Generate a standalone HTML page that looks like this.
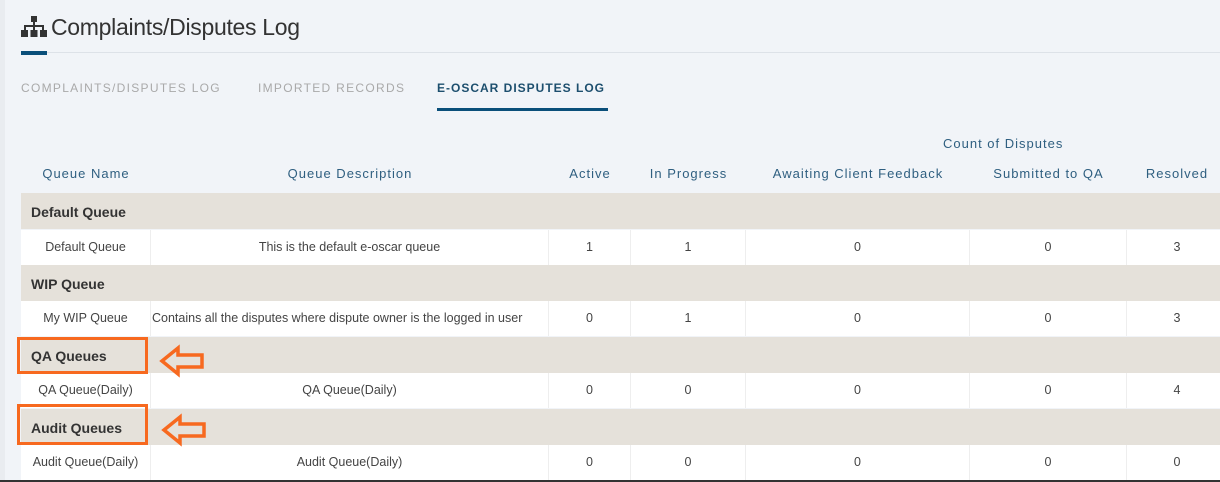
<!DOCTYPE html>
<html><head><meta charset="utf-8"><style>
*{margin:0;padding:0;box-sizing:border-box}
body{width:1220px;height:482px;overflow:hidden;background:#f1f4f8;font-family:"Liberation Sans",sans-serif;position:relative}
.abs{position:absolute}
.title{left:51px;top:14px;font-size:23px;color:#333;letter-spacing:-0.3px}
.tab{top:81px;font-size:12px;letter-spacing:1.3px;color:#a9a9a9}
.hd{top:166px;font-size:13px;color:#2f5f80;letter-spacing:1px;text-align:center;white-space:nowrap}
.row{position:absolute;left:21px;width:1199px}
.grp{background:#e5e1da;height:36px;font-weight:bold;font-size:14px;color:#333;padding:11px 0 0 10px}
.dat{background:#fff;height:35px;font-size:12.5px;color:#444}
.dat div{position:absolute;top:0;height:35px;line-height:35px;text-align:center;border-right:1px solid #eee}
</style></head><body>
<div class="abs" style="left:0;top:0;width:5px;height:482px;background:#e9ecf0"></div>
<svg class="abs" style="left:21px;top:16px" width="26" height="22" viewBox="0 0 26 22"><rect x="10" y="0" width="6" height="6" fill="#333"/><rect x="12" y="6" width="2" height="4" fill="#333"/><rect x="3" y="9" width="20" height="2" fill="#333"/><rect x="3" y="9" width="2" height="5" fill="#333"/><rect x="21" y="9" width="2" height="5" fill="#333"/><rect x="12" y="9" width="2" height="5" fill="#333"/><rect x="0" y="14" width="7" height="7" fill="#333"/><rect x="9.5" y="14" width="7" height="7" fill="#333"/><rect x="19" y="14" width="7" height="7" fill="#333"/></svg>
<div class="abs title">Complaints/Disputes Log</div>
<div class="abs" style="left:21px;top:52px;width:1199px;height:1px;background:#dde2e8"></div>
<div class="abs" style="left:21px;top:51px;width:26px;height:4px;background:#0a4f7a"></div>
<div class="abs tab" style="left:21px">COMPLAINTS/DISPUTES LOG</div>
<div class="abs tab" style="left:258px">IMPORTED RECORDS</div>
<div class="abs tab" style="left:437px;color:#1d4f6e;font-weight:bold;letter-spacing:1px">E-OSCAR DISPUTES LOG</div>
<div class="abs" style="left:437px;top:108px;width:171px;height:3px;background:#0a4f7a"></div>
<div class="abs hd" style="left:943px;top:136px">Count of Disputes</div>
<div class="abs hd" style="left:21px;width:130px">Queue Name</div>
<div class="abs hd" style="left:151px;width:398px">Queue Description</div>
<div class="abs hd" style="left:549px;width:82px">Active</div>
<div class="abs hd" style="left:631px;width:115px">In Progress</div>
<div class="abs hd" style="left:746px;width:224px">Awaiting Client Feedback</div>
<div class="abs hd" style="left:970px;width:157px">Submitted to QA</div>
<div class="abs hd" style="left:1127px;width:100px">Resolved</div>

<div class="row grp" style="top:193px">Default Queue</div>
<div class="row dat" style="top:230px"><div style="left:0;width:130px">Default Queue</div><div style="left:130px;width:398px">This is the default e-oscar queue</div><div style="left:528px;width:82px">1</div><div style="left:610px;width:115px">1</div><div style="left:725px;width:224px">0</div><div style="left:949px;width:157px">0</div><div style="left:1106px;width:100px;border:0">3</div></div>
<div class="row grp" style="top:265px">WIP Queue</div>
<div class="row dat" style="top:301px"><div style="left:0;width:130px">My WIP Queue</div><div style="left:130px;width:398px;white-space:nowrap;overflow:hidden;text-align:left;padding-left:1px">Contains all the disputes where dispute owner is the logged in user</div><div style="left:528px;width:82px">0</div><div style="left:610px;width:115px">1</div><div style="left:725px;width:224px">0</div><div style="left:949px;width:157px">0</div><div style="left:1106px;width:100px;border:0">3</div></div>
<div class="row grp" style="top:337px">QA Queues</div>
<div class="row dat" style="top:373px"><div style="left:0;width:130px">QA Queue(Daily)</div><div style="left:130px;width:398px">QA Queue(Daily)</div><div style="left:528px;width:82px">0</div><div style="left:610px;width:115px">0</div><div style="left:725px;width:224px">0</div><div style="left:949px;width:157px">0</div><div style="left:1106px;width:100px;border:0">4</div></div>
<div class="row grp" style="top:409px">Audit Queues</div>
<div class="row dat" style="top:445px"><div style="left:0;width:130px">Audit Queue(Daily)</div><div style="left:130px;width:398px">Audit Queue(Daily)</div><div style="left:528px;width:82px">0</div><div style="left:610px;width:115px">0</div><div style="left:725px;width:224px">0</div><div style="left:949px;width:157px">0</div><div style="left:1106px;width:100px;border:0">0</div></div>
<div class="abs" style="left:0;top:480px;width:1220px;height:2px;background:#333"></div>

<div class="abs" style="left:17px;top:337px;width:131px;height:37px;border:3px solid #f7691f"></div>
<div class="abs" style="left:17px;top:404px;width:131px;height:41px;border:3px solid #f7691f"></div>
<svg class="abs" style="left:158px;top:344px" width="48" height="34" viewBox="0 0 48 34"><path d="M4 17 L20 4 L20 11 L44 11 L44 23 L20 23 L20 30 Z" fill="none" stroke="#f7691f" stroke-width="3.5" stroke-linejoin="miter"/></svg>
<svg class="abs" style="left:160px;top:413px" width="48" height="34" viewBox="0 0 48 34"><path d="M4 17 L20 4 L20 11 L44 11 L44 23 L20 23 L20 30 Z" fill="none" stroke="#f7691f" stroke-width="3.5" stroke-linejoin="miter"/></svg>
</body></html>
